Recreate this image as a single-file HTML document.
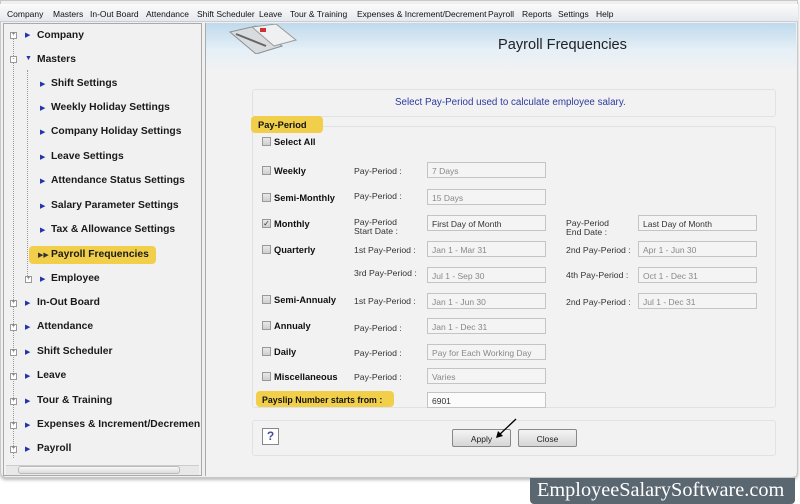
<!DOCTYPE html>
<html><head><meta charset="utf-8"><style>
*{margin:0;padding:0;box-sizing:border-box}
body{width:800px;height:504px;background:#fff;font-family:"Liberation Sans",sans-serif;position:relative;overflow:hidden}
.a{position:absolute;white-space:nowrap}
#win{left:0;top:0;width:798px;height:478px;background:#f0f0f0;border:1px solid #c8c8c8;border-radius:0 0 6px 6px;box-shadow:0 2px 3px #bbb}
#menu{left:0;top:4px;width:798px;height:18px;background:linear-gradient(#fbfbfb,#e6e9ee);border-bottom:1px solid #c9ccd2;font-size:8.5px;color:#111}
#menu span{position:absolute;top:5px}
#left{left:3px;top:23px;width:199px;height:453px;background:#f1f1f1;border:1px solid #a9a9a9}
.t{font-size:10.3px;font-weight:bold;color:#1a1a1a}
.tri{font-size:7px;color:#2233aa}
.plus{width:7px;height:7px;border:1px solid #999;background:#fff;font-size:6px;line-height:5px;text-align:center;color:#555}
#right{left:205px;top:23px;width:591px;height:453px;background:#f2f2f2;border-left:1px solid #aaa}
#hdr{left:206px;top:23px;width:590px;height:50px;background:linear-gradient(#bfd9ec,#e6f0f7 55%,#f2f2f2)}
.box{border:1px solid #dfe3e6;border-radius:3px;background:#f2f2f2}
.lbl{font-size:8.7px;color:#333}
.cb{width:9px;height:9px;border:1px solid #999;background:linear-gradient(#e8e8e8,#cfcfcf)}
.bl{font-size:9.3px;font-weight:bold;color:#111}
.in{height:16px;border:1px solid #c4c4c4;background:#f4f4f4;font-size:8.5px;color:#888;padding:3px 0 0 4px}
.btn{height:18px;border:1px solid #888;border-radius:2px;background:linear-gradient(#f4f4f4,#d6d6d6);font-size:8.5px;text-align:center;padding-top:4px;color:#222}
</style></head><body>
<div id="win" class="a"></div>
<div id="menu" class="a">
<span style="left:7px">Company</span><span style="left:53px">Masters</span><span style="left:90px">In-Out Board</span><span style="left:146px">Attendance</span><span style="left:197px">Shift Scheduler</span><span style="left:259px">Leave</span><span style="left:290px">Tour &amp; Training</span><span style="left:357px">Expenses &amp; Increment/Decrement</span><span style="left:488px">Payroll</span><span style="left:522px">Reports</span><span style="left:558px">Settings</span><span style="left:596px">Help</span>
</div>
<div id="left" class="a"></div>
<div class="a" style="left:13px;top:38px;height:420px;border-left:1px dotted #999"></div>
<div class="a" style="left:27px;top:70px;height:210px;border-left:1px dotted #999"></div>

<div class="a plus" style="left:10px;top:32px">+</div><div class="a tri" style="left:25px;top:31px">▶</div><div class="a t" style="left:37px;top:30px">Company</div>
<div class="a plus" style="left:10px;top:56px">-</div><div class="a tri" style="left:25px;top:55px">▼</div><div class="a t" style="left:37px;top:54px">Masters</div>
<div class="a tri" style="left:40px;top:80px">▶</div><div class="a t" style="left:51px;top:78px">Shift Settings</div>
<div class="a tri" style="left:40px;top:104px">▶</div><div class="a t" style="left:51px;top:102px">Weekly Holiday Settings</div>
<div class="a tri" style="left:40px;top:128px">▶</div><div class="a t" style="left:51px;top:126px">Company Holiday Settings</div>
<div class="a tri" style="left:40px;top:153px">▶</div><div class="a t" style="left:51px;top:151px">Leave Settings</div>
<div class="a tri" style="left:40px;top:177px">▶</div><div class="a t" style="left:51px;top:175px">Attendance Status Settings</div>
<div class="a tri" style="left:40px;top:202px">▶</div><div class="a t" style="left:51px;top:200px">Salary Parameter Settings</div>
<div class="a tri" style="left:40px;top:226px">▶</div><div class="a t" style="left:51px;top:224px">Tax &amp; Allowance Settings</div>
<div class="a" style="left:29px;top:246px;width:127px;height:18px;background:#f2cf4a;border-radius:4px"></div>
<div class="a tri" style="left:38px;top:251px;color:#333">▶▶</div><div class="a t" style="left:51px;top:249px">Payroll Frequencies</div>
<div class="a plus" style="left:25px;top:276px">+</div><div class="a tri" style="left:40px;top:275px">▶</div><div class="a t" style="left:51px;top:273px">Employee</div>
<div class="a plus" style="left:10px;top:300px">+</div><div class="a tri" style="left:25px;top:299px">▶</div><div class="a t" style="left:37px;top:297px">In-Out Board</div>
<div class="a plus" style="left:10px;top:324px">+</div><div class="a tri" style="left:25px;top:323px">▶</div><div class="a t" style="left:37px;top:321px">Attendance</div>
<div class="a plus" style="left:10px;top:349px">+</div><div class="a tri" style="left:25px;top:348px">▶</div><div class="a t" style="left:37px;top:346px">Shift Scheduler</div>
<div class="a plus" style="left:10px;top:373px">+</div><div class="a tri" style="left:25px;top:372px">▶</div><div class="a t" style="left:37px;top:370px">Leave</div>
<div class="a plus" style="left:10px;top:398px">+</div><div class="a tri" style="left:25px;top:397px">▶</div><div class="a t" style="left:37px;top:395px">Tour &amp; Training</div>
<div class="a plus" style="left:10px;top:422px">+</div><div class="a tri" style="left:25px;top:421px">▶</div><div class="a t" style="left:37px;top:419px;width:163px;overflow:hidden">Expenses &amp; Increment/Decrement</div>
<div class="a plus" style="left:10px;top:446px">+</div><div class="a tri" style="left:25px;top:445px">▶</div><div class="a t" style="left:37px;top:443px">Payroll</div>
<div class="a" style="left:6px;top:465px;width:193px;height:10px;background:#e8e8e8;border-top:1px solid #ccc"></div>
<div class="a" style="left:18px;top:466px;width:162px;height:8px;background:linear-gradient(#f8f8f8,#dcdcdc);border:1px solid #bbb;border-radius:3px"></div>

<div id="right" class="a"></div>
<div id="hdr" class="a"></div>
<svg class="a" style="left:226px;top:24px" width="80" height="30" viewBox="0 0 80 30">
<polygon points="4,8 30,2 56,22 30,30" fill="#d8dcdf" stroke="#8a8f93"/>
<polygon points="26,3 50,0 70,16 48,22" fill="#eef0f2" stroke="#999"/>
<rect x="34" y="4" width="6" height="4" fill="#c33"/><line x1="10" y1="10" x2="40" y2="22" stroke="#666" stroke-width="2"/>
</svg>
<div class="a" style="left:498px;top:37px;font-size:14.6px;color:#222">Payroll Frequencies</div>

<div class="a box" style="left:252px;top:89px;width:524px;height:28px"></div>
<div class="a" style="left:395px;top:97px;font-size:9.8px;color:#2e3a9e">Select Pay-Period used to calculate employee salary.</div>
<div class="a box" style="left:252px;top:126px;width:524px;height:282px"></div>
<div class="a" style="left:251px;top:116px;width:72px;height:17px;background:#f2cf4a;border-radius:4px"></div>
<div class="a bl" style="left:258px;top:120px">Pay-Period</div>

<div class="a cb" style="left:262px;top:137px"></div><div class="a bl" style="left:274px;top:137px">Select All</div>

<div class="a cb" style="left:262px;top:166px"></div><div class="a bl" style="left:274px;top:166px">Weekly</div>
<div class="a lbl" style="left:354px;top:166px">Pay-Period :</div><div class="a in" style="left:427px;top:162px;width:119px">7 Days</div>

<div class="a cb" style="left:262px;top:193px"></div><div class="a bl" style="left:274px;top:193px">Semi-Monthly</div>
<div class="a lbl" style="left:354px;top:191px">Pay-Period :</div><div class="a in" style="left:427px;top:189px;width:119px">15 Days</div>

<div class="a cb" style="left:262px;top:219px;font-size:8px;line-height:7px;color:#333;text-align:center">✓</div><div class="a bl" style="left:274px;top:219px">Monthly</div>
<div class="a lbl" style="left:354px;top:218px;line-height:9px">Pay-Period<br>Start Date :</div><div class="a in" style="left:427px;top:215px;width:119px;color:#333">First Day of Month</div>
<div class="a lbl" style="left:566px;top:219px;line-height:9px">Pay-Period<br>End Date :</div><div class="a in" style="left:638px;top:215px;width:119px;color:#333">Last Day of Month</div>

<div class="a cb" style="left:262px;top:245px"></div><div class="a bl" style="left:274px;top:245px">Quarterly</div>
<div class="a lbl" style="left:354px;top:245px">1st Pay-Period :</div><div class="a in" style="left:427px;top:241px;width:119px">Jan 1 - Mar 31</div>
<div class="a lbl" style="left:566px;top:245px">2nd Pay-Period :</div><div class="a in" style="left:638px;top:241px;width:119px">Apr 1 - Jun 30</div>

<div class="a lbl" style="left:354px;top:268px">3rd Pay-Period :</div><div class="a in" style="left:427px;top:267px;width:119px">Jul 1 - Sep 30</div>
<div class="a lbl" style="left:566px;top:270px">4th Pay-Period :</div><div class="a in" style="left:638px;top:267px;width:119px">Oct 1 - Dec 31</div>

<div class="a cb" style="left:262px;top:295px"></div><div class="a bl" style="left:274px;top:295px">Semi-Annualy</div>
<div class="a lbl" style="left:354px;top:296px">1st Pay-Period :</div><div class="a in" style="left:427px;top:293px;width:119px">Jan 1 - Jun 30</div>
<div class="a lbl" style="left:566px;top:297px">2nd Pay-Period :</div><div class="a in" style="left:638px;top:293px;width:119px">Jul 1 - Dec 31</div>

<div class="a cb" style="left:262px;top:321px"></div><div class="a bl" style="left:274px;top:321px">Annualy</div>
<div class="a lbl" style="left:354px;top:323px">Pay-Period :</div><div class="a in" style="left:427px;top:318px;width:119px">Jan 1 - Dec 31</div>

<div class="a cb" style="left:262px;top:347px"></div><div class="a bl" style="left:274px;top:347px">Daily</div>
<div class="a lbl" style="left:354px;top:348px">Pay-Period :</div><div class="a in" style="left:427px;top:344px;width:119px">Pay for Each Working Day</div>

<div class="a cb" style="left:262px;top:372px"></div><div class="a bl" style="left:274px;top:372px">Miscellaneous</div>
<div class="a lbl" style="left:354px;top:372px">Pay-Period :</div><div class="a in" style="left:427px;top:368px;width:119px">Varies</div>

<div class="a" style="left:256px;top:391px;width:138px;height:16px;background:#f2cf4a;border-radius:4px"></div>
<div class="a" style="left:262px;top:395px;font-size:8.8px;font-weight:bold;color:#111">Payslip Number starts from :</div>
<div class="a in" style="left:427px;top:392px;width:119px;background:#fbfbfb;color:#333">6901</div>

<div class="a box" style="left:252px;top:420px;width:524px;height:36px"></div>
<div class="a" style="left:262px;top:428px;width:17px;height:17px;border:1px solid #888;background:#fff;font-size:12px;font-weight:bold;color:#4a4a9a;text-align:center;line-height:15px">?</div>
<div class="a btn" style="left:452px;top:429px;width:59px">Apply</div>
<div class="a btn" style="left:518px;top:429px;width:59px">Close</div>
<svg class="a" style="left:494px;top:418px" width="24" height="22"><line x1="22" y1="1" x2="4" y2="18" stroke="#000" stroke-width="1.3"/><polygon points="2,20 4,13 9,18" fill="#000"/></svg>

<div class="a" style="left:530px;top:478px;width:265px;height:26px;background:#5a6670;border-radius:0 0 4px 4px"></div>
<div class="a" style="left:537px;top:479px;font-family:'Liberation Serif',serif;font-size:20.3px;color:#fff">EmployeeSalarySoftware.com</div>
</body></html>
